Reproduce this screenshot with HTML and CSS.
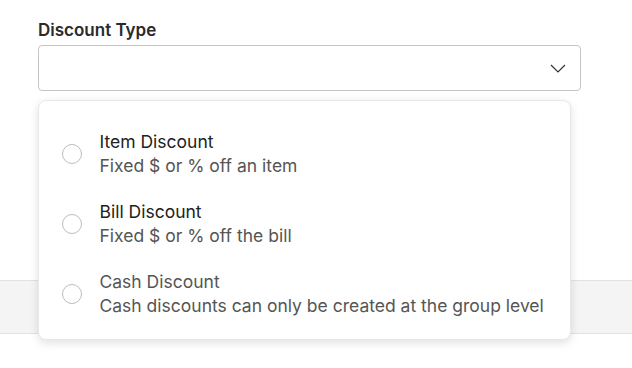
FILE: index.html
```html
<!DOCTYPE html>
<html lang="en">
<head>
  <meta charset="UTF-8">
  <title>Discount Type</title>
  <link rel="stylesheet" href="styles.css">
</head>
<body>
  <div class="field">
    <label class="field-label">Discount Type</label>
    <div class="select">
      <svg class="chevron" width="16" height="9" viewBox="0 0 16 9"><path d="M1 1l7 7 7-7" fill="none" stroke="#333" stroke-width="1.2"/></svg>
    </div>
  </div>

  <div class="band"></div>

  <ul class="menu">
    <li class="option">
      <span class="radio"></span>
      <div class="option-text">
        <div class="option-title">Item Discount</div>
        <div class="option-sub">Fixed $ or % off an item</div>
      </div>
    </li>
    <li class="option">
      <span class="radio"></span>
      <div class="option-text">
        <div class="option-title">Bill Discount</div>
        <div class="option-sub">Fixed $ or % off the bill</div>
      </div>
    </li>
    <li class="option disabled">
      <span class="radio"></span>
      <div class="option-text">
        <div class="option-title">Cash Discount</div>
        <div class="option-sub">Cash discounts can only be created at the group level</div>
      </div>
    </li>
  </ul>
</body>
</html>
```

FILE: styles.css
```css
body {
  font-family: Inter, "Noto Sans", sans-serif;
  margin: 0;
  background: #fff;
  color: #222;
  position: relative;
  height: 368px;
  overflow: hidden;
}

.field {
  padding: 19px 0 0 38px;
  width: 543px;
}

.field-label {
  display: block;
  font-size: 17px;
  font-weight: 600;
  color: #2a2a2a;
  line-height: 23px;
  margin-bottom: 3px;
}

.select {
  height: 44px;
  border: 1px solid #c4c4c4;
  border-radius: 4px;
  display: flex;
  align-items: center;
  justify-content: flex-end;
  padding-right: 14px;
}

.chevron {
  display: block;
}

.band {
  margin-top: 189px;
  height: 52px;
  background: #f4f4f4;
  border-top: 1px solid #e2e2e2;
  border-bottom: 1px solid #e2e2e2;
}

.menu {
  position: absolute;
  top: 100px;
  left: 38px;
  width: 533px;
  height: 240px;
  box-sizing: border-box;
  margin: 0;
  padding: 18px 0 0 0;
  list-style: none;
  background: #fff;
  border: 1px solid #e8e8e8;
  border-radius: 8px;
  box-shadow: 0 3px 10px rgba(0, 0, 0, 0.12);
}

.option {
  display: flex;
  align-items: center;
  height: 70px;
  padding-left: 23px;
  box-sizing: border-box;
}

.radio {
  width: 18px;
  height: 18px;
  border: 1.8px solid #bcbcbc;
  border-radius: 50%;
  margin-right: 17.5px;
  flex-shrink: 0;
}

.option-title {
  font-size: 17.5px;
  line-height: 24px;
  color: #222;
}

.option-sub {
  font-size: 17.5px;
  line-height: 24px;
  color: #555;
}

.disabled .option-title {
  color: #555;
}
```
